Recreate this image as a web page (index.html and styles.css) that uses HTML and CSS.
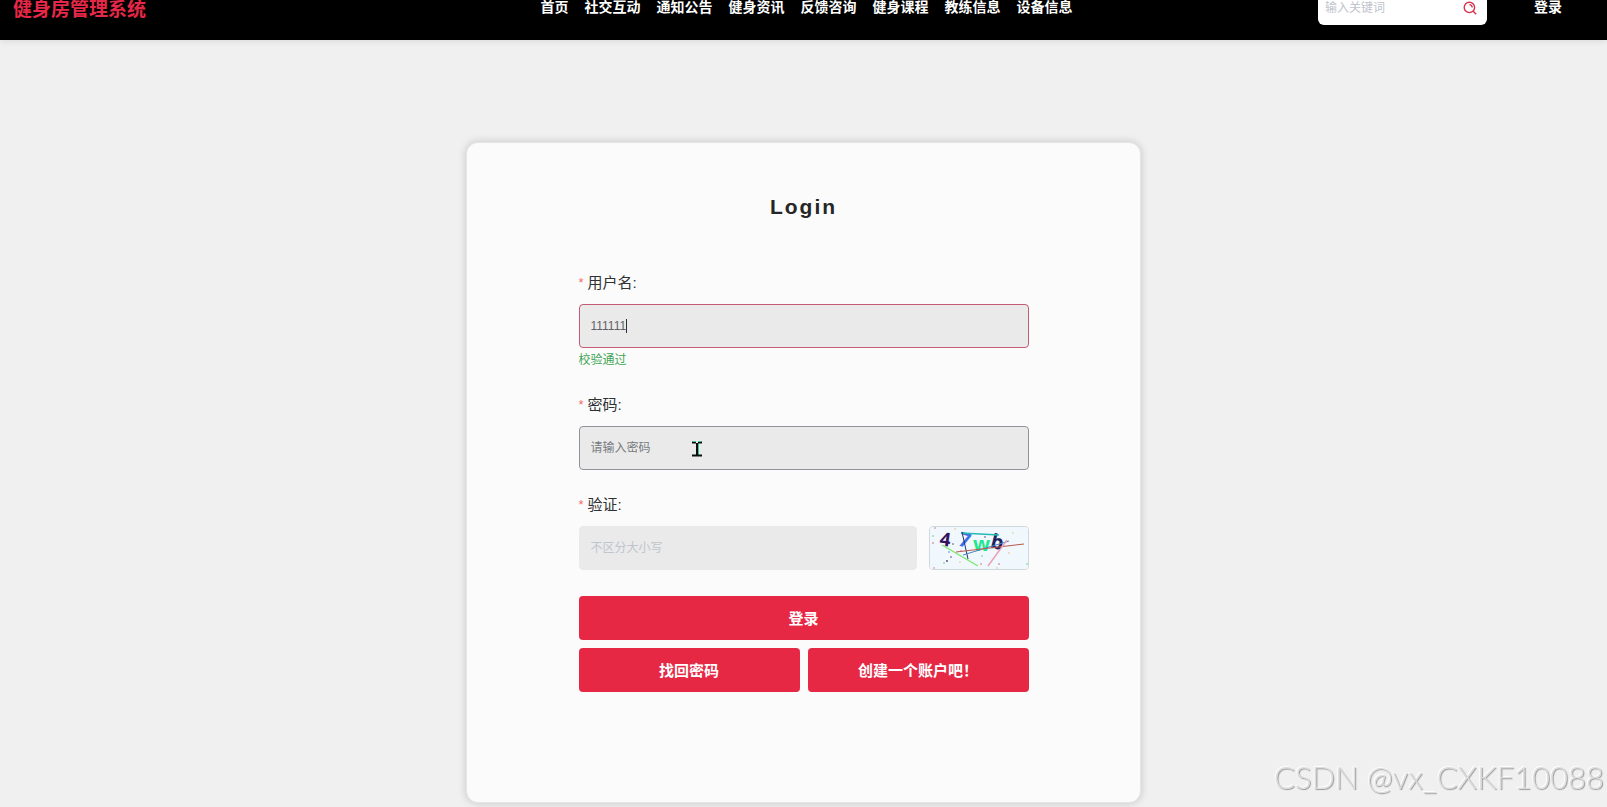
FILE: index.html
```html
<!DOCTYPE html>
<html lang="zh-CN">

<head>
    <meta charset="UTF-8">
    <title>健身房管理系统</title>
    <link rel="stylesheet" href="styles.css">
</head>

<body>
    <header class="header">
        <a class="logo" href="#">健身房管理系统</a>
        <nav class="nav">
            <a href="#">首页</a>
            <a href="#">社交互动</a>
            <a href="#">通知公告</a>
            <a href="#">健身资讯</a>
            <a href="#">反馈咨询</a>
            <a href="#">健身课程</a>
            <a href="#">教练信息</a>
            <a href="#">设备信息</a>
        </nav>
        <div class="header-right">
            <form class="search">
                <input type="text" placeholder="输入关键词" aria-label="输入关键词">
                <button type="button" aria-label="搜索">
                    <svg width="14" height="14" viewBox="0 0 14 14" fill="none" stroke="#d9304c" stroke-width="1.4">
                        <circle cx="6.4" cy="6.4" r="5.2" />
                        <path d="M6.4 3.6a2.8 2.8 0 0 1 2.8 2.8M10.2 10.2l3 3" />
                    </svg>
                </button>
            </form>
            <a class="go-login" href="#">登录</a>
        </div>
    </header>

    <main class="card">
        <h1 class="title">Login</h1>
        <form class="login-form">
            <div class="item">
                <label for="username">用户名:</label>
                <div class="field">
                    <input class="active" type="text" id="username" value="111111">
                    <span class="caret"></span>
                </div>
                <p class="tip">校验通过</p>
            </div>
            <div class="item">
                <label for="password">密码:</label>
                <div class="field">
                    <input class="hover" type="password" id="password" placeholder="请输入密码">
                    <svg class="cursor" width="10" height="16" viewBox="0 0 10 16" fill="none">
                        <path d="M6 2v12" stroke="#3fc39a" stroke-width="2" />
                        <path d="M0 1.5h4M6 1.5h4M0 14.5h10M5 2v12" stroke="#06120d" stroke-width="2" />
                        <path d="M1 .5h3M6 .5h3" stroke="#3fc39a" />
                    </svg>
                </div>
            </div>
            <div class="item">
                <label for="code">验证:</label>
                <div class="code-row">
                    <input type="text" id="code" placeholder="不区分大小写">
                    <svg class="code-img" viewBox="0 0 98 42">
                        <rect width="98" height="42" fill="#f0f8fe" />
                        <g font-family="Open Sans, sans-serif" font-weight="700">
                            <text x="10" y="19" font-size="19" fill="#33135f" transform="rotate(8 15 12)">4</text>
                            <text x="29" y="20" font-size="20" fill="#416fe8" transform="rotate(16 34 13)">7</text>
                            <text x="43" y="24" font-size="20" fill="#1fe890">w</text>
                            <text x="61" y="22" font-size="20" fill="#1c2360" transform="rotate(14 67 15)">b</text>
                        </g>
                        <g fill="none" stroke-width="1">
                            <path d="M12 18l36 21" stroke="#7be86e" stroke-width="1.4" />
                            <path d="M31 6l38 2" stroke="#25b9b2" stroke-width="1.4" />
                            <path d="M32 5l6 27" stroke="#25316f" />
                            <path d="M33 28l46-14" stroke="#4b86c5" />
                            <path d="M26 25l68-8" stroke="#b65a4c" />
                            <path d="M58 39l19-26" stroke="#ec9db0" stroke-width="1.4" />
                        </g>
                        <g fill="#c95d75">
                            <circle cx="3" cy="16" r=".8" />
                            <circle cx="51" cy="37" r=".8" />
                            <circle cx="69" cy="37" r=".8" />
                            <circle cx="31" cy="24" r=".8" />
                            <circle cx="5" cy="1" r=".7" />
                            <circle cx="4" cy="41" r=".7" />
                        </g>
                        <g fill="#50406b">
                            <circle cx="21" cy="30" r=".8" />
                            <circle cx="17" cy="34" r=".9" />
                            <circle cx="55" cy="10" r=".8" />
                            <circle cx="23" cy="17" r=".8" />
                        </g>
                        <g fill="#e4c56e">
                            <circle cx="83" cy="6" r=".8" />
                            <circle cx="79" cy="26" r=".8" />
                            <circle cx="30" cy="35" r=".8" />
                            <circle cx="67" cy="41" r=".8" />
                            <circle cx="25" cy="2" r=".8" />
                        </g>
                        <g fill="#63ce79">
                            <circle cx="3" cy="9" r=".8" />
                            <circle cx="14" cy="36" r=".8" />
                            <circle cx="52" cy="29" r=".8" />
                            <circle cx="97" cy="37" r=".8" />
                            <circle cx="19" cy="25" r=".8" fill="#4b86c5" />
                        </g>
                    </svg>
                </div>
            </div>
            <div class="btns">
                <button class="btn wide" type="button">登录</button>
                <button class="btn" type="button">找回密码</button>
                <button class="btn" type="button">创建一个账户吧！</button>
            </div>
        </form>
    </main>

    <div class="watermark">CSDN @vx_CXKF10088</div>
</body>

</html>
```

FILE: styles.css
```css
* {
    box-sizing: border-box;
}

body {
    margin: 0;
    background: #f0f0f0;
    color: #303133;
    font-family: "Liberation Sans", "Noto Sans CJK SC", sans-serif;
    font-size: 12px;
}

a {
    color: #fff;
    text-decoration: none;
}

input,
button {
    font-family: inherit;
    outline: none;
}

/* 顶部导航 */
.header {
    display: grid;
    grid-template-columns: 1fr auto 1fr;
    align-items: center;
    height: 66px;
    margin-top: -26px;
    padding: 0 45px 0 13px;
    background: #000;
    box-shadow: 0 2px 6px rgba(0, 0, 0, .08);
}

.logo {
    color: #e62848;
    font-size: 19px;
    font-weight: bold;
}

.nav {
    display: flex;
    gap: 16px;
    padding: 0 0 3px 38px;
    font-size: 14px;
    font-weight: bold;
}

.header-right {
    display: flex;
    align-items: center;
    justify-content: flex-end;
    gap: 47px;
}

.search {
    display: flex;
    align-items: center;
    width: 169px;
    height: 36px;
    padding: 2px 10px 0 7px;
    background: #fff;
    border-radius: 6px;
}

.search input {
    flex: 1;
    min-width: 0;
    padding: 0;
    border: 0;
    background: none;
    font-size: 12px;
}

.search button {
    display: flex;
    padding: 0;
    border: 0;
    background: none;
    cursor: pointer;
}

.go-login {
    padding-bottom: 3px;
    font-size: 14px;
    font-weight: bold;
}

::placeholder {
    color: #c0c4cc;
    opacity: 1;
}

/* 登录框 */
.card {
    width: 42%;
    min-width: 490px;
    margin: 102px auto 5px;
    padding: 52px 0 110px;
    background: #fbfbfb;
    border: 1px solid #e2e7e6;
    border-radius: 12px;
    box-shadow: 0 0 8px rgba(0, 0, 0, .18);
}

.title {
    margin: 0 0 52px;
    color: #262626;
    font-size: 21px;
    line-height: 24px;
    letter-spacing: 2px;
    text-align: center;
}

.login-form {
    width: 450px;
    margin: 0 auto;
}

.item {
    margin-bottom: 23px;
}

.item label {
    display: flex;
    height: 24px;
    margin-bottom: 9px;
    font-size: 15px;
    line-height: 24px;
}

.item label::before {
    content: "*";
    margin-right: 4px;
    color: #f56c6c;
    font-size: 13px;
}

.item input {
    display: block;
    width: 100%;
    height: 44px;
    padding: 0 11px;
    background: #eaeaea;
    border: 1px solid #eaeaea;
    border-radius: 4px;
    color: #606266;
    font-size: 12px;
}

.item input.active {
    border-color: #c45a73;
}

.item input.hover {
    border-color: #909399;
}

.item input.hover::placeholder {
    color: #777b80;
}

.field {
    position: relative;
}

.caret {
    position: absolute;
    left: 47px;
    top: 15px;
    width: 1px;
    height: 14px;
    background: #303133;
}

.cursor {
    position: absolute;
    left: 113px;
    top: 15px;
}

.tip {
    margin: 2px 0 0;
    color: #3fa556;
    line-height: 20px;
}

.code-row {
    display: flex;
    gap: 12px;
}

.code-row input {
    flex: 1;
}

.code-img {
    width: 100px;
    height: 44px;
    border: 1px solid #cfd8dd;
    border-radius: 4px;
}

.btns {
    display: grid;
    grid-template-columns: 1fr 1fr;
    gap: 8px;
    padding-top: 3px;
}

.btn {
    height: 44px;
    padding: 0 0 2px;
    background: #e62845;
    border: 0;
    border-radius: 4px;
    color: #fff;
    font-size: 15px;
    font-weight: bold;
    cursor: pointer;
}

.btn.wide {
    grid-column: 1 / 3;
}

.watermark {
    position: fixed;
    right: 3px;
    bottom: 11px;
    color: #dcdcdc;
    font-family: Lato, sans-serif;
    font-size: 31px;
    font-weight: 300;
    text-shadow: 1px 1px 1px #999, -1px -1px 1px #fff;
}
```
